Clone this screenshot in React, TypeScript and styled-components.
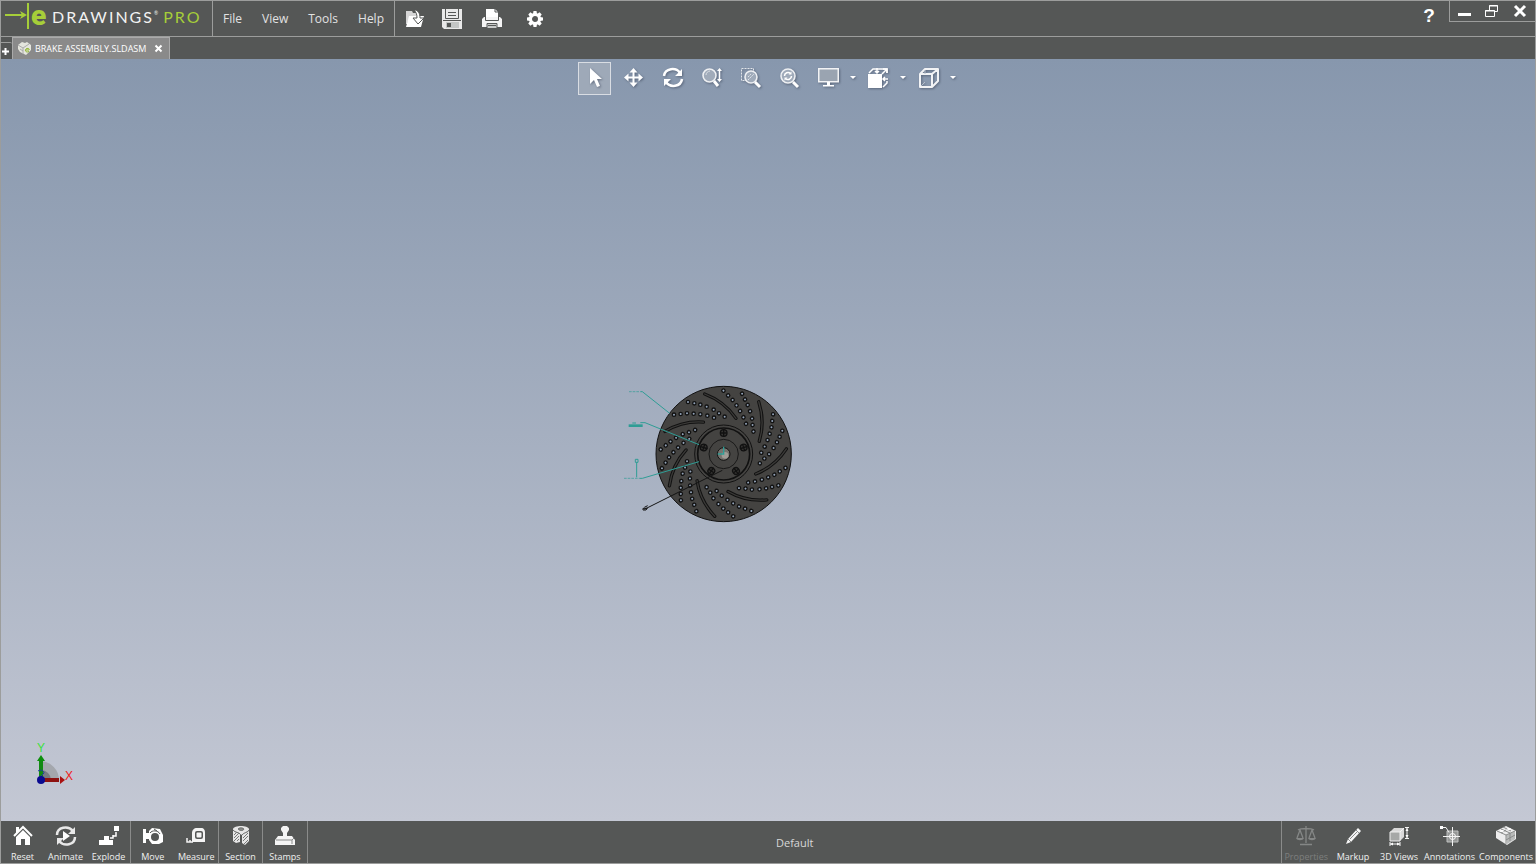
import React from "react";
import styled, { createGlobalStyle, css } from "styled-components";

const chrome = "#555756";
const line = "#9c9d9c";
const teal = "#2f9d95";
const lime = "#a6ce39";

const GlobalStyle = createGlobalStyle`
  * { box-sizing: border-box; }
  body { margin: 0; font-family: "Open Sans", "Noto Sans", sans-serif; }
  button { font: inherit; color: inherit; background: none; border: 0; padding: 0; cursor: pointer; }
  svg { display: block; flex: none; overflow: visible; }
`;

const Window = styled.div`
  display: flex;
  flex-direction: column;
  min-height: 100vh;
  border: 1px solid ${line};
  background: ${chrome};
  color: #fff;
`;

const Header = styled.header`
  display: flex;
  height: 36px;
  flex: none;
  border-bottom: 1px solid ${line};
`;

const Brand = styled.div`
  display: flex;
  align-items: flex-start;
  width: 212px;
  padding: 1px 0 0 4px;
  border-right: 1px solid ${line};
`;

const BrandLetter = styled.span`
  width: 21px;
  color: ${lime};
  font-family: Roboto, "Liberation Sans", sans-serif;
  font-size: 28px;
  line-height: 28px;
  font-weight: 900;
`;

const BrandWord = styled.span<{ $accent?: boolean }>`
  font-family: Lato, sans-serif;
  font-size: 16px;
  line-height: 30px;
  letter-spacing: 2px;
  color: ${(p) => (p.$accent ? lime : "#f2f2f2")};
  margin-left: ${(p) => (p.$accent ? "5px" : "0")};
`;

const Registered = styled.sup`
  font-size: 5px;
  line-height: 5px;
  letter-spacing: 0;
  vertical-align: 8px;
`;

const MenuBar = styled.nav`
  display: flex;
  align-items: center;
  gap: 20px;
  width: 182px;
  padding-left: 10px;
  border-right: 1px solid ${line};
  font-size: 12px;
  line-height: 16px;
  color: #e2e2e2;
`;

const QuickBar = styled.div`
  display: flex;
  flex: 1;
  padding-left: 2px;
`;

const QuickButton = styled.button<{ $width: number }>`
  display: flex;
  align-items: center;
  justify-content: center;
  width: ${(p) => p.$width}px;
`;

const HelpButton = styled.button`
  align-self: flex-start;
  width: 40px;
  font-family: "Liberation Sans", sans-serif;
  font-size: 19px;
  line-height: 30px;
  font-weight: 700;
`;

const WindowControls = styled.div`
  display: flex;
  align-items: center;
  height: 21px;
  padding-right: 1px;
  border-left: 1px solid ${line};
  border-bottom: 1px solid ${line};
`;

const WindowButton = styled.button`
  display: flex;
  justify-content: center;
  width: 28px;
`;

const TabStrip = styled.div`
  display: flex;
  height: 22px;
  flex: none;
`;

const AddTab = styled.button`
  align-self: flex-end;
  width: 11px;
  height: 17px;
  padding: 0 0 0 1px;
  border-top: 1px solid ${line};
  border-radius: 0 2px 0 0;
`;

const Tab = styled.div`
  display: flex;
  align-items: center;
  padding: 0 7px 0 5px;
  border: 1px solid #aaa;
  border-bottom: 0;
  background: #8a8a8a;
`;

const TabTitle = styled.button`
  display: flex;
  align-items: center;
  gap: 4px;
  margin-right: 9px;
  font-size: 9px;
  line-height: 12px;
`;

const Viewport = styled.main`
  position: relative;
  flex: 1;
  min-height: 400px;
  background: linear-gradient(#8797ad, #c4c8d4);
`;

const ViewTools = styled.div`
  display: flex;
  justify-content: center;
  gap: 6px;
  padding: 3px 2px 0 0;
`;

const shadow = css`
  svg { filter: drop-shadow(1px 1px 1px rgba(60, 70, 90, 0.6)); }
`;

const ViewTool = styled.button<{ $active?: boolean }>`
  display: flex;
  align-items: center;
  justify-content: center;
  width: 33px;
  height: 33px;
  padding-bottom: 2px;
  border: 1px solid ${(p) => (p.$active ? "#d9dde3" : "transparent")};
  background: ${(p) => (p.$active ? "#9ea9b8" : "none")};
  ${shadow}
`;

const ViewMenu = styled.div`
  display: flex;
`;

const Caret = styled.button`
  display: flex;
  align-items: center;
  justify-content: flex-end;
  width: 11px;
  padding-bottom: 2px;
  ${shadow}
`;

const Model = styled.svg`
  position: absolute;
  left: calc(50% - 153px);
  top: calc(50% - 65px);
`;

const Triad = styled.svg`
  position: absolute;
  left: 29px;
  bottom: 30px;
`;

const Footer = styled.footer`
  display: flex;
  align-items: stretch;
  height: 42px;
  flex: none;
  color: #f0f0f0;
`;

const Action = styled.button`
  display: flex;
  flex-direction: column;
  align-items: center;
  justify-content: space-between;
  padding: 5px 2px 0;
  font-size: 9px;
  line-height: 13px;
  &:disabled { color: #7d7f7e; }
`;

const Group = styled.div<{ $width: number }>`
  display: flex;
  width: ${(p) => p.$width}px;
  border-right: 1px solid #8a8b8a;
  ${Action} { flex: 1 1 0; }
`;

const PanelGroup = styled.div`
  display: flex;
  border-left: 1px solid #8a8b8a;
  ${Action} { min-width: 46px; }
`;

const Status = styled.div`
  flex: 1;
  align-self: center;
  padding-top: 2px;
  text-align: center;
  font-size: 11px;
  line-height: 16px;
  color: #d8d8d8;
`;

type IconProps = { w?: number; h?: number; children: React.ReactNode };
const Icon = ({ w = 20, h = 20, children }: IconProps) => (
  <svg width={w} height={h} viewBox={`0 0 ${w} ${h}`} fill="none" stroke="none" aria-hidden="true">
    {children}
  </svg>
);

const OpenIcon = () => (
  <Icon>
    <path d="M1 2h6l1 2h4v3H5L2 15H1z" fill="#d6d6d6" />
    <path d="M4 7h15l-3 11H1z" fill="#fff" />
    <path d="M9 1c4 0 6 3 6 8h4l-6 6-5-6h4c0-4-1-6-3-8z" fill="#fff" stroke={chrome} />
  </Icon>
);
const SaveIcon = () => (
  <Icon>
    <path d="M0 0h20v20H2l-2-2z" fill="#e9e9e9" />
    <path d="M3.500 0v9.500h13V0M6 3.500h8M6 6.500h8M1 11.500h18" stroke={chrome} />
    <path d="M4 13h13v6H4z" fill="#c3c6c5" />
    <path d="M5 14h4v4H5z" fill={chrome} />
  </Icon>
);
const PrintIcon = () => (
  <Icon>
    <path d="M4 0h9l3 3v5H4z" fill="#fff" />
    <path d="M13 0v3h3" stroke={chrome} />
    <path d="M2 8h16l2 2v8H0v-8z" fill="#f4f4f4" />
    <path d="M3.500 8v3.500h13V8" stroke={chrome} />
    <path d="M5 14.500h10v5H5z" fill="#c7c9c8" stroke={chrome} />
    <path d="M6 16.500h8" stroke={chrome} />
  </Icon>
);
const GearIcon = () => (
  <Icon w={16} h={16}>
    <circle cx="8" cy="8" r="4.5" stroke="#fff" strokeWidth="3" />
    {[0, 45, 90, 135, 180, 225, 270, 315].map((a) => (
      <path key={a} d="M6 3l.5-3h3l.5 3z" fill="#fff" transform={`rotate(${a} 8 8)`} />
    ))}
  </Icon>
);
const PartIcon = () => (
  <Icon w={13} h={13}>
    <path d="M0 3l4-3 3 1 2-1 4 3v5l-5 5-6-3-2-3z" fill="#e4e5dd" />
    <path d="M0 3l5 3v6M5 6l6-4M2 7l3 2" stroke="#aaa" />
    <path d="M11 9.500c-3 1.500-4.500-1-3-2.500s4 0 3 1H8" stroke="#8fb52e" />
  </Icon>
);

const PointerIcon = () => (
  <Icon w={12} h={19}>
    <path d="M1 0v16l4-4 3 7 3-1-3-7h5z" fill="#fff" />
  </Icon>
);
const PanIcon = () => (
  <Icon w={19} h={19}>
    <path d="M9.500 3v13M3 9.500h13" stroke="#fff" strokeWidth="2" />
    <path d="M9.500 0l4 4.500h-8zM9.500 19l4-4.500h-8zM0 9.500l4.500-4v8zM19 9.500l-4.500-4v8z" fill="#fff" />
  </Icon>
);
const RotateIcon = () => (
  <Icon w={20} h={19}>
    <path d="M1 8c1-8 12-9 16-3M19 11c-1 8-12 9-16 3" stroke="#fff" strokeWidth="2.500" />
    <path d="M19 1v7h-7zM1 18v-7h7z" fill="#fff" />
  </Icon>
);
const ZoomIcon = () => (
  <Icon w={20} h={19}>
    <circle cx="7.500" cy="7.500" r="6.500" stroke="#eef0f3" strokeWidth="1.600" fill="#a0abba" />
    <path d="M4 7c0-2 2-4 4-4" stroke="#dde1e6" />
    <path d="M12 13l4 5" stroke="#fff" strokeWidth="3" />
    <path d="M17.500 2v10" stroke="#fff" strokeWidth="1.500" />
    <path d="M17.500 0l2.500 3h-5zM17.500 14l2.500-3h-5z" fill="#fff" />
  </Icon>
);
const ZoomAreaIcon = () => (
  <Icon w={20} h={20}>
    <path d="M.5 .5h12v12H.5z" stroke="#e2e6eb" strokeDasharray="2 1" />
    <circle cx="10" cy="9" r="6" stroke="#eef0f3" strokeWidth="1.600" fill="#a0abba" />
    <path d="M7 12l6-6M7 9l3-3" stroke="#e2e6eb" strokeDasharray="2 1" />
    <path d="M14 14l5 5" stroke="#fff" strokeWidth="3" />
  </Icon>
);
const ZoomFitIcon = () => (
  <Icon w={20} h={20}>
    <circle cx="8" cy="8" r="7" stroke="#eef0f3" strokeWidth="1.600" fill="#a0abba" />
    <path d="M4.500 8a3.500 3.500 0 0 1 6-2.500M11.500 8a3.500 3.500 0 0 1-6 2.500" stroke="#fff" strokeWidth="1.500" />
    <path d="M11.500 3.500v3h-3zM4.500 12.500v-3h3z" fill="#fff" />
    <path d="M13 14l5 5" stroke="#fff" strokeWidth="3" />
  </Icon>
);
const DisplayIcon = () => (
  <Icon w={21} h={19}>
    <path d="M.75 .75h19.500v13H.75z" fill="#9aa4b1" stroke="#f2f3f5" strokeWidth="1.500" />
    <path d="M9 14h3v3h4v1.500H5V17h4z" fill="#fff" />
  </Icon>
);
const ViewCubeIcon = () => (
  <Icon w={21} h={20}>
    <path d="M0 6h14v14H0z" fill="#fff" />
    <path d="M1 5l4-4h14v4M19 13v2l-4 4" stroke="#fff" strokeWidth="1.500" />
    <path d="M9 0v5M7 3l2 2 2-2M14 6l5-5M15 1h4v4M20 11h-5M17 9l-2 2 2 2" stroke="#fff" strokeWidth="1.500" />
  </Icon>
);
const BoxIcon = () => (
  <Icon w={20} h={20}>
    <path d="M1 6h12v13H1zM1 6l5-5h13v12l-6 6M13 6l6-5" stroke="#f2f3f5" strokeWidth="2" strokeLinejoin="round" />
    <path d="M6 2v4M2 18l4-4" stroke="#b7c0cc" />
  </Icon>
);

const HomeIcon = () => (
  <Icon>
    <path d="M1 10l9-9 9 9" stroke="#fff" strokeWidth="2" />
    <path d="M3 1h3v4L3 8zM10 4l7 7v8h-5v-6H8v6H3v-8z" fill="#fff" />
  </Icon>
);
const AnimateIcon = () => (
  <Icon>
    <path d="M1 9C1 1 12-1 17 5M19 11c0 8-11 10-16 4" stroke="#e8e8e8" strokeWidth="2.500" />
    <path d="M19 1v7h-7zM1 19v-7h7z" fill="#e8e8e8" />
    <path d="M7 5l7 5-7 5z" fill="#fff" />
  </Icon>
);
const ExplodeIcon = () => (
  <Icon>
    <path d="M0 14h5v-4h5v4h4v5H0zM15 0h5v5h-5z" fill="#fff" />
    <path d="M17 6v4h-3M14 9v3h-3" stroke="#fff" strokeWidth="1.500" />
  </Icon>
);
const MoveIcon = () => (
  <Icon>
    <path d="M0 3h3v4h4v6H3v4H0z" fill="#fff" />
    <path d="M6 5l3-3 8 1 3 6v7l-4 2H9l-3-4z" fill="#fff" />
    <circle cx="12" cy="11" r="4" fill={chrome} />
    <path d="M7 7c2-3 8-3 10 1M11 3l3 2" stroke={chrome} />
  </Icon>
);
const MeasureIcon = () => (
  <Icon>
    <path d="M6 16V7c0-3 2-5 5-5h4c3 0 4 2 4 5v9z" fill="#f4f4f4" />
    <rect x="9" y="5" width="8" height="8" rx="2" fill={chrome} />
    <rect x="10.500" y="6.500" width="5" height="5" rx="1" fill="#f4f4f4" />
    <path d="M1 12v4h6M4 14v2M8 13v2" stroke="#f4f4f4" strokeWidth="1.500" />
  </Icon>
);
const SectionIcon = () => (
  <Icon>
    <path d="M2 3c1-4 15-4 16 0v12l-4 4-3-2V9L9 8v8l-4 1-3-2z" fill="#e6e6e6" />
    <path d="M2 4c2 3 6 2 7 4M18 4c-1 3-5 2-7 5M7 3c2-2 5-1 6 0-1 2-4 2-6 0z" stroke="#6b6d6c" fill="#8b8d8c" />
    <path d="M3 9l3-3M3 12l5-5M3 15l5-5M6 15l2-2M12 12l5-5M12 15l5-5M13 18l4-4" stroke="#777978" />
  </Icon>
);
const StampIcon = () => (
  <Icon>
    <path d="M6 2l2-2h4l2 2v2l-2 3v3h5l3 4v5H0v-5l3-4h5V7L6 4z" fill="#f4f4f4" />
    <path d="M1 14h16l2-2M17 14v4" stroke="#888a89" />
  </Icon>
);
const ScaleIcon = () => (
  <Icon>
    <path d="M10 0v17M4 18.500h12M2 4c3-2 13-2 16 0M1 12l3-8 3 8M13 12l3-8 3 8" stroke="#858786" strokeWidth="1.300" />
    <path d="M0 12h8c-1 3-7 3-8 0zM12 12h8c-1 3-7 3-8 0z" fill="#858786" />
  </Icon>
);
const PencilIcon = () => (
  <Icon w={17} h={20}>
    <path d="M1 18l2-5L13 2l3 3L6 16z" fill="#f6f6f6" />
    <path d="M11 4l3 3M3 13l3 3M5 13l8-8" stroke="#8c8e8d" />
  </Icon>
);
const Views3DIcon = () => (
  <Icon>
    <path d="M1 6l4-4h10v9l-4 4H1z" fill="#d9d9d9" />
    <path d="M1 6h10v9H1z" fill="#a6a8a7" stroke="#eee" />
    <path d="M11 6l4-4M18 2v10M16 1.500h4M16 12.500h4M1 18h10M1 16v4M11 16v4" stroke="#f4f4f4" />
    <path d="M18 2l1.500 3h-3zM18 12l1.500-3h-3zM1 18l3-1.500v3zM11 18l-3-1.500v3z" fill="#fff" />
  </Icon>
);
const AnnotationsIcon = () => (
  <Icon>
    <path d="M7 5h11v11H7z" fill="#959796" stroke="#bfc1c0" />
    <circle cx="12.500" cy="10.500" r="3" stroke="#fff" />
    <path d="M12.500 1v19M3 10.500h17M2 1.500h4l3 5" stroke="#f4f4f4" />
    <path d="M0 0h3v3H0z" fill="#fff" />
  </Icon>
);
const ComponentsIcon = () => (
  <Icon>
    <path d="M0 5l10-5 10 5v8l-9 6L0 12z" fill="#ededed" />
    <path d="M10 9l9-4v8l-8 5z" fill="#b9bbba" />
    <path d="M1 5l9 4v9M5 3l9 4v8M5 7l5-3M10 9l9-4M10 14l9-5M7 1l8 4" stroke="#8a8c8b" />
    <ellipse cx="6" cy="5" rx="2" ry="1" fill="#fff" />
    <ellipse cx="13" cy="3" rx="2" ry="1" fill="#fff" />
  </Icon>
);

const innerHoles = [[-107, -156], [-88, -152], [-70, -148], [-51, -142], [-30, -133], [-14, -122], [3, -112]];
const outerHoles = [[-149, -118], [-129, -120], [-110, -122], [-90, -121], [-70, -119], [-49, -115], [-29, -109]];
const sectors = [0, 1, 2, 3, 4, 5, 6];
const bolts = [0, 1, 2, 3, 4];

const BrakeDisc = () => (
  <Model width="190" height="155" viewBox="0 0 570 465" role="img" aria-label="Brake disc model">
    <g transform="translate(326 237)" fill="none" stroke="#111">
      <circle r="203" fill="#444341" strokeWidth="3" />
      {sectors.map((s) => (
        <g key={s} transform={`rotate(${(s * 360) / 7})`}>
          <path d="M-57 -180Q2 -158 37 -107" stroke="#111" strokeWidth="10" strokeLinecap="round" />
          <path d="M-57 -180Q2 -158 37 -107" stroke="#3b3a38" strokeWidth="4" strokeLinecap="round" />
          {[...innerHoles, ...outerHoles].map(([x, y]) => (
            <circle key={`${x}${y}`} cx={x} cy={y} r="5" fill="#93a3b8" strokeWidth="4" />
          ))}
        </g>
      ))}
      <circle r="87" fill="#444341" strokeWidth="3" />
      <circle r="78" strokeWidth="5" />
      <circle r="44" strokeWidth="2.500" />
      {bolts.map((b) => (
        <g key={b} transform={`rotate(${b * 72})`}>
          <circle cy="-63" r="10" fill="#353432" strokeWidth="4" />
          <path d="M0 -75V-51M-9 -63H9" strokeWidth="4" />
        </g>
      ))}
      <circle r="19" fill="#77736e" strokeWidth="3" />
      <circle cx="4" cy="4" r="10" fill="#a09c96" stroke="none" />
      <path d="M0 -22V0H-18" stroke={teal} strokeWidth="4" />
    </g>
    <g fill="none" stroke={teal} strokeWidth="3">
      <path d="M76 50H82L164 115M76 143H90L252 209M74 310H82L252 260M65 307V262" />
      <path d="M42 50H74M27 310H74" strokeDasharray="8 3" strokeWidth="2" />
      <path d="M61 253h8v9h-8zM52 144h11" />
      <path d="M41 152H83" strokeWidth="8" />
    </g>
    <path d="M88 403L322 286M84 400h13l-4 5h-9zM88 397l10-5" fill="none" stroke="#151515" strokeWidth="3" />
  </Model>
);

const AxisTriad = () => (
  <Triad width="45" height="48" viewBox="0 0 45 48" aria-label="Orientation axes" role="img">
    <path d="M11 18a19 19 0 0 1 18 19H11z" fill="#a4a7ad" />
    <path d="M11 27a10 10 0 0 1 10 10H11z" fill="#777b83" />
    <path d="M11 37V17" stroke="#128a12" strokeWidth="4" />
    <path d="M11 12l4 6H7z" fill="#0c8f0c" />
    <path d="M11 37H29" stroke="#8d1111" strokeWidth="4" />
    <path d="M35 37l-5-4v8z" fill="#a11" />
    <path d="M8 28c3-2 6 0 6 2l-4 4" stroke="#1b3f9c" fill="none" />
    <circle cx="11" cy="37" r="4" fill="#0a0a90" />
    <text x="11" y="9" textAnchor="middle" fontFamily="Liberation Sans, sans-serif" fontSize="12" fill="#3be03b">Y</text>
    <text x="39" y="37" textAnchor="middle" fontFamily="Liberation Sans, sans-serif" fontSize="12" fill="#f02020">X</text>
  </Triad>
);

const CaretDown = () => (
  <Icon w={6} h={3}>
    <path d="M0 0h6L3 3z" fill="#fff" />
  </Icon>
);

const viewTools = [
  { label: "Select", icon: <PointerIcon />, active: true },
  { label: "Pan", icon: <PanIcon /> },
  { label: "Rotate", icon: <RotateIcon /> },
  { label: "Zoom", icon: <ZoomIcon /> },
  { label: "Zoom to area", icon: <ZoomAreaIcon /> },
  { label: "Zoom to fit", icon: <ZoomFitIcon /> },
];
const viewMenus = [
  { label: "Display", icon: <DisplayIcon /> },
  { label: "Orientation", icon: <ViewCubeIcon /> },
  { label: "Display style", icon: <BoxIcon /> },
];
const quickActions = [
  { label: "Open", width: 36, icon: <OpenIcon /> },
  { label: "Save", width: 38, icon: <SaveIcon /> },
  { label: "Print", width: 42, icon: <PrintIcon /> },
  { label: "Options", width: 44, icon: <GearIcon /> },
];
const actionGroups = [
  {
    width: 130,
    actions: [
      { label: "Reset", icon: <HomeIcon /> },
      { label: "Animate", icon: <AnimateIcon /> },
      { label: "Explode", icon: <ExplodeIcon /> },
    ],
  },
  {
    width: 88,
    actions: [
      { label: "Move", icon: <MoveIcon /> },
      { label: "Measure", icon: <MeasureIcon /> },
    ],
  },
  { width: 44, actions: [{ label: "Section", icon: <SectionIcon /> }] },
  { width: 45, actions: [{ label: "Stamps", icon: <StampIcon /> }] },
];
const panels = [
  { label: "Properties", icon: <ScaleIcon />, disabled: true },
  { label: "Markup", icon: <PencilIcon /> },
  { label: "3D Views", icon: <Views3DIcon /> },
  { label: "Annotations", icon: <AnnotationsIcon /> },
  { label: "Components", icon: <ComponentsIcon /> },
];

export default function App() {
  return (
    <Window>
      <GlobalStyle />
      <Header>
        <Brand>
          <Icon w={26} h={28}>
            <path d="M0 13h17M23 1v26" stroke={lime} strokeWidth="2" />
            <path d="M15 9l7 4-7 4 2-4z" fill={lime} />
          </Icon>
          <BrandLetter>e</BrandLetter>
          <BrandWord>
            DRAWINGS<Registered>®</Registered>
          </BrandWord>
          <BrandWord $accent>PRO</BrandWord>
        </Brand>
        <MenuBar>
          {["File", "View", "Tools", "Help"].map((m) => (
            <button key={m}>{m}</button>
          ))}
        </MenuBar>
        <QuickBar>
          {quickActions.map((q) => (
            <QuickButton key={q.label} $width={q.width} aria-label={q.label}>
              {q.icon}
            </QuickButton>
          ))}
        </QuickBar>
        <HelpButton aria-label="Help">?</HelpButton>
        <WindowControls>
          <WindowButton aria-label="Minimize">
            <Icon w={13} h={12}>
              <path d="M0 8h13v3H0z" fill="#fff" />
            </Icon>
          </WindowButton>
          <WindowButton aria-label="Restore">
            <Icon w={14} h={13}>
              <path d="M4.500 5V.5h8v6H10M4 1h9M.5 5.500h9v6h-9zM0 6h10" stroke="#fff" />
            </Icon>
          </WindowButton>
          <WindowButton aria-label="Close">
            <Icon w={12} h={12}>
              <path d="M1 1l10 10M11 1L1 11" stroke="#fff" strokeWidth="3" />
            </Icon>
          </WindowButton>
        </WindowControls>
      </Header>
      <TabStrip>
        <AddTab aria-label="New tab">
          <Icon w={7} h={7}>
            <path d="M3.500 0v7M0 3.500h7" stroke="#fff" strokeWidth="2" />
          </Icon>
        </AddTab>
        <Tab>
          <TabTitle>
            <PartIcon />
            BRAKE ASSEMBLY.SLDASM
          </TabTitle>
          <button aria-label="Close tab">
            <Icon w={7} h={7}>
              <path d="M.5 .5l6 6M6.500 .5l-6 6" stroke="#fff" strokeWidth="2" />
            </Icon>
          </button>
        </Tab>
      </TabStrip>
      <Viewport>
        <ViewTools>
          {viewTools.map((t) => (
            <ViewTool key={t.label} $active={t.active} aria-label={t.label}>
              {t.icon}
            </ViewTool>
          ))}
          {viewMenus.map((t) => (
            <ViewMenu key={t.label}>
              <ViewTool aria-label={t.label}>{t.icon}</ViewTool>
              <Caret aria-label={`${t.label} options`}>
                <CaretDown />
              </Caret>
            </ViewMenu>
          ))}
        </ViewTools>
        <BrakeDisc />
        <AxisTriad />
      </Viewport>
      <Footer>
        {actionGroups.map((g) => (
          <Group key={g.width} $width={g.width}>
            {g.actions.map((a) => (
              <Action key={a.label}>
                {a.icon}
                {a.label}
              </Action>
            ))}
          </Group>
        ))}
        <Status>Default</Status>
        <PanelGroup>
          {panels.map((p) => (
            <Action key={p.label} disabled={p.disabled}>
              {p.icon}
              {p.label}
            </Action>
          ))}
        </PanelGroup>
      </Footer>
    </Window>
  );
}
